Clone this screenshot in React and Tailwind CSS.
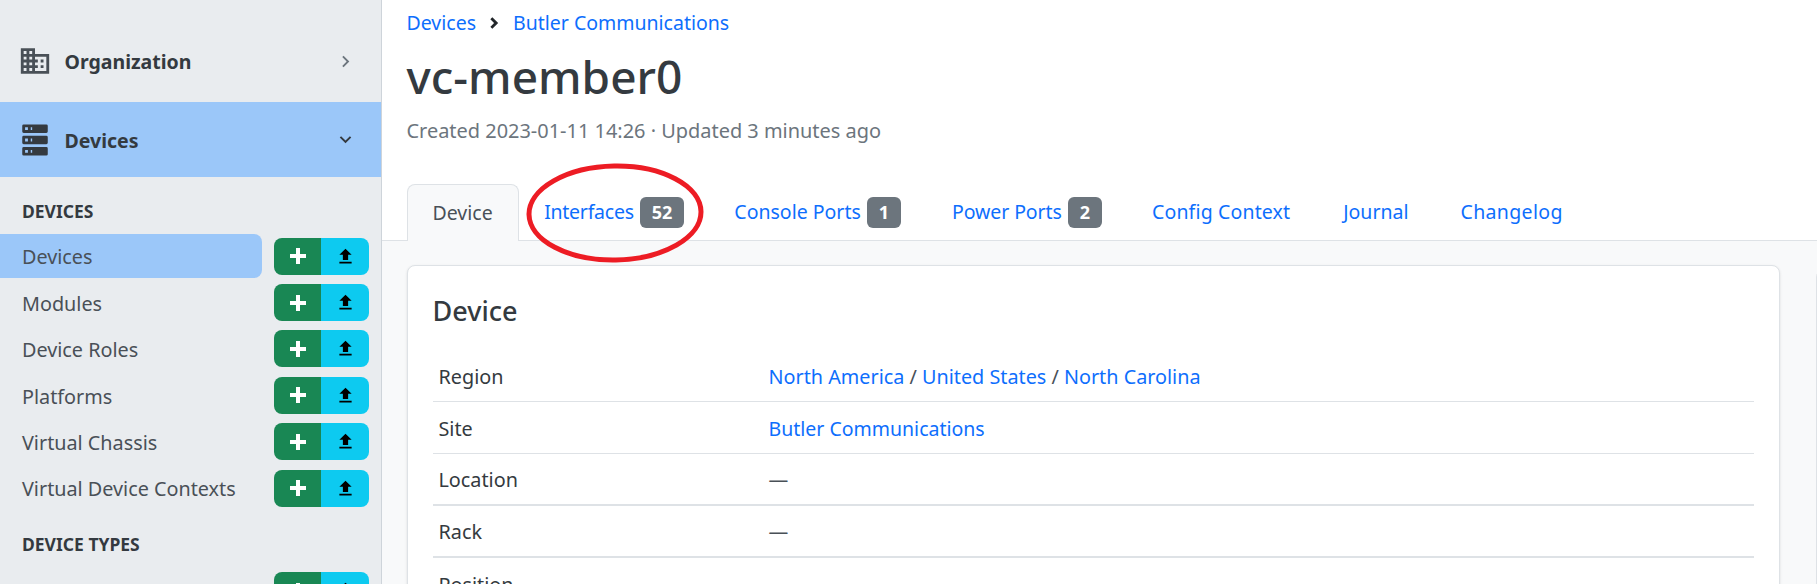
const paths = {
    domain: "M18,15H16V17H18M18,11H16V13H18M20,19H12V17H14V15H12V13H14V11H12V9H20M10,7H8V5H10M10,11H8V9H10M10,15H8V13H10M10,19H8V17H10M6,7H4V5H6M6,11H4V9H6M6,15H4V13H6M6,19H4V17H6M12,7V3H2V21H22V7H12Z",
    server: "M4,1H20A1,1 0 0,1 21,2V6A1,1 0 0,1 20,7H4A1,1 0 0,1 3,6V2A1,1 0 0,1 4,1M4,9H20A1,1 0 0,1 21,10V14A1,1 0 0,1 20,15H4A1,1 0 0,1 3,14V10A1,1 0 0,1 4,9M4,17H20A1,1 0 0,1 21,18V22A1,1 0 0,1 20,23H4A1,1 0 0,1 3,22V18A1,1 0 0,1 4,17M9,5H10V3H9V5M9,13H10V11H9V13M9,21H10V19H9V21M5,3V5H7V3H5M5,11V13H7V11H5M5,19V21H7V19H5Z",
    plus: "M20 14H14V20H10V14H4V10H10V4H14V10H20V14Z",
    upload: "M9,16V10H5L12,3L19,10H15V16H9M5,20V18H19V20H5Z",
    right: "M8.59,16.58L13.17,12L8.59,7.41L10,6L16,12L10,18L8.59,16.58Z",
    down: "M7.41,8.58L12,13.17L16.59,8.58L18,10L12,16L6,10L7.41,8.58Z",
};

const Icon = ({ name, className, ...props }) => (
    <svg viewBox="0 0 24 24" fill="currentColor" className={className} {...props}>
        <path d={paths[name]} fillRule="evenodd" />
    </svg>
);

const NavRow = ({ label, active }) => (
    <div className="flex h-[46.4px] items-center">
        <div
            className={`flex h-[44px] w-[262px] items-center rounded-r-lg pl-[22px] pt-[2px] ${
                active ? "bg-[#9bc7f9]" : ""
            }`}
        >
            {label}
        </div>
        <div className="ml-[12px] flex h-[37px] w-[95px] overflow-hidden rounded-lg">
            <span className="flex w-[47px] items-center justify-center bg-[#198754] text-white">
                <Icon name="plus" className="size-[24px]" />
            </span>
            <span className="flex w-[48px] items-center justify-center bg-[#0dcaf0] text-black">
                <Icon name="upload" className="size-[21px]" />
            </span>
        </div>
    </div>
);

const Sidebar = () => (
    <aside className="w-[382px] shrink-0 border-r border-[#ced4da] bg-[#e9ecef] pt-[20px] text-[#495057]">
        <div className="flex h-[82px] items-center pl-[17.5px] pr-[24px] text-[19.5px] font-bold text-[#343a40]">
            <Icon name="domain" className="mr-[13px] size-[34px] text-[#495057]" />
            <span className="flex-1 pt-[2px]">Organization</span>
            <Icon name="right" className="size-[23px] text-[#6c757d]" />
        </div>
        <div className="flex h-[75px] items-center bg-[#9bc7f9] pl-[17.5px] pr-[24px] text-[19.5px] font-bold text-[#343a40]">
            <Icon name="server" className="mr-[13px] size-[34px]" />
            <span className="flex-1 pt-[2px]">Devices</span>
            <Icon name="down" className="size-[23px]" />
        </div>
        <div className="pb-[10px] pl-[22px] pt-[22px] text-[17.5px] font-bold leading-[24px] text-[#343a40]">
            DEVICES
        </div>
        <NavRow label="Devices" active />
        <NavRow label="Modules" />
        <NavRow label="Device Roles" />
        <NavRow label="Platforms" />
        <NavRow label="Virtual Chassis" />
        <NavRow label="Virtual Device Contexts" />
        <div className="pb-[11px] pl-[22px] pt-[21px] text-[17.5px] font-bold leading-[24px] text-[#343a40]">
            DEVICE TYPES
        </div>
        <NavRow label="Device Types" />
    </aside>
);

const Tab = ({ label, count, className = "", tabClass = "" }) => (
    <a className={`flex h-[56px] items-center gap-[6px] px-[24.5px] text-[19.5px] text-[#0d6efd] ${tabClass}`}>
        <span className={className}>{label}</span>
        {count && (
            <span className="flex h-[31px] items-center rounded-md bg-[#6c757d] px-[12px] text-[18px] font-bold text-white">
                {count}
            </span>
        )}
    </a>
);

const Row = ({ label, thick, children }) => (
    <div
        className={`grid h-[52px] grid-cols-[330px_1fr] items-center border-[#dee2e6] px-[6px] pt-[2px] ${
            thick ? "border-b-2" : "border-b"
        }`}
    >
        <span className="text-[#343a40]">{label}</span>
        <span className="text-[#495057]">{children}</span>
    </div>
);

const Link = ({ children }) => <a className="text-[#0d6efd]">{children}</a>;

export default function App() {
    return (
        <div className="flex h-[584px] w-[1817px] overflow-hidden bg-white font-['Noto_Sans',sans-serif] text-[19.8px]">
            <Sidebar />
            <main className="relative min-w-0 flex-1">
                <div className="px-[24.5px] pt-[10px]">
                    <div className="flex h-[26px] items-center text-[19.5px] text-[#0d6efd]">
                        <span>Devices</span>
                        <svg viewBox="0 0 24 24" fill="currentColor" stroke="currentColor" strokeWidth="1.4" className="mx-[8.5px] size-[20px] text-[#212529]">
                            <path d={paths.right} />
                        </svg>
                        <span>Butler Communications</span>
                    </div>
                    <h1 className="mt-[14px] text-[46px] font-medium leading-[52px] text-[#343a40]">
                        vc-member0
                    </h1>
                    <div className="mt-[14px] h-[26px] text-[19.95px] text-[#6c757d]">
                        Created 2023-01-11 14:26 · Updated 3 minutes ago
                    </div>
                </div>
                <div className="mt-[42px] flex items-end gap-[1px] border-b border-[#dee2e6] pl-[24.5px]">
                    <div className="-mb-px flex h-[57px] items-center rounded-t-lg border border-b-0 border-[#dee2e6] bg-[#f8f9fa] px-[25px] text-[19.5px] text-[#495057]">
                        Device
                    </div>
                    <Tab label="Interfaces" count="52" className="tracking-[-0.25px]" />
                    <Tab label="Console Ports" count="1" />
                    <Tab label="Power Ports" count="2" className="tracking-[-0.1px]" tabClass="ml-[1px]" />
                    <Tab label="Config Context" className="tracking-[0.15px]" />
                    <Tab label="Journal" tabClass="ml-[3px]" />
                    <Tab label="Changelog" className="tracking-[0.35px]" tabClass="ml-[2px]" />
                </div>
                <div className="h-[400px] bg-[#f8f9fa] pl-[24.5px] pt-[24px]">
                    <div className="flex">
                        <section className="h-[400px] w-[1373px] shrink-0 rounded-lg border border-[#dee2e6] bg-white px-[25px] shadow-sm">
                            <h5 className="pt-[26px] text-[27px] font-medium leading-[38px] text-[#343a40]">
                                Device
                            </h5>
                            <div className="mt-[20px]">
                                <Row label="Region">
                                    <Link>North America</Link> / <Link>United States</Link> /{" "}
                                    <Link>North Carolina</Link>
                                </Row>
                                <Row label="Site">
                                    <span className="text-[19.5px]">
                                        <Link>Butler Communications</Link>
                                    </span>
                                </Row>
                                <Row label="Location" thick>
                                    —
                                </Row>
                                <Row label="Rack" thick>
                                    —
                                </Row>
                                <Row label="Position" />
                            </div>
                        </section>
                        <section className="ml-[36px] mt-[4px] h-[400px] w-[300px] shrink-0 rounded-lg border border-[#dee2e6] bg-white" />
                    </div>
                </div>
                <svg
                    className="absolute left-[142px] top-[160px] h-[106px] w-[182px] text-[#ed1c24]"
                    viewBox="0 0 182 106"
                    fill="none"
                    stroke="currentColor"
                    strokeWidth="5"
                >
                    <ellipse cx="91" cy="53" rx="86" ry="47" transform="rotate(-1 91 53)" />
                </svg>
            </main>
        </div>
    );
}
